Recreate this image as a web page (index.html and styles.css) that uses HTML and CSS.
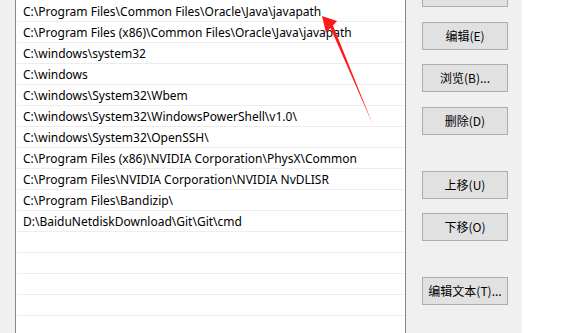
FILE: index.html
```html
<!DOCTYPE html>
<html>
<head>
<meta charset="utf-8">
<link rel="stylesheet" href="styles.css">
</head>
<body>
<div class="dialog">
  <div class="strip"></div>
  <div class="list">
    <div class="row">C:\Program Files\Common Files\Oracle\Java\javapath</div>
    <div class="row">C:\Program Files (x86)\Common Files\Oracle\Java\javapath</div>
    <div class="row">C:\windows\system32</div>
    <div class="row">C:\windows</div>
    <div class="row">C:\windows\System32\Wbem</div>
    <div class="row">C:\windows\System32\WindowsPowerShell\v1.0\</div>
    <div class="row">C:\windows\System32\OpenSSH\</div>
    <div class="row">C:\Program Files (x86)\NVIDIA Corporation\PhysX\Common</div>
    <div class="row">C:\Program Files\NVIDIA Corporation\NVIDIA NvDLISR</div>
    <div class="row">C:\Program Files\Bandizip\</div>
    <div class="row">D:\BaiduNetdiskDownload\Git\Git\cmd</div>
    <div class="row"></div>
    <div class="row"></div>
    <div class="row"></div>
    <div class="row"></div>
    <div class="row"></div>
  </div>
  <div class="buttons">
    <div class="btn first"></div>
    <div class="btn">编辑(E)</div>
    <div class="btn gap14">浏览(B)...</div>
    <div class="btn">删除(D)</div>
    <div class="btn gap36">上移(U)</div>
    <div class="btn gap14">下移(O)</div>
    <div class="btn gap36">编辑文本(T)...</div>
  </div>
</div>
<svg class="arrow" width="571" height="333" viewBox="0 0 571 333">
  <polygon points="322,16 337,21 333,25.5 373,125 330.5,28 326,33" fill="#ff1a1a"/>
</svg>
</body>
</html>
```
FILE: styles.css
```css
html, body {
  margin: 0;
  padding: 0;
  background: #ffffff;
  overflow: hidden;
}
body {
  width: 571px;
  height: 333px;
  position: relative;
  font-family: "Noto Sans", "Noto Sans CJK SC", sans-serif;
  font-size: 12px;
  color: #000;
}
.dialog {
  width: 522px;
  height: 333px;
  background: #f0f0f0;
  display: flex;
  overflow: hidden;
}
.strip {
  width: 15px;
  flex: none;
}
.list {
  width: 389px;
  flex: none;
  background: #fff;
  border-left: 1px solid #828790;
  border-right: 1px solid #828790;
  padding-top: 1px;
}
.row {
  height: 20px;
  line-height: 22px;
  margin: 0 1px;
  padding-left: 6px;
  border-bottom: 1px solid #ededed;
  white-space: nowrap;
  overflow: hidden;
}
.buttons {
  display: flex;
  flex-direction: column;
  padding-left: 16px;
}
.btn {
  width: 84px;
  height: 26px;
  line-height: 25px;
  border: 1px solid #adadad;
  background: #e1e1e1;
  text-align: center;
  margin-top: 15px;
  font-family: "Noto Sans CJK SC", sans-serif;
  flex: none;
}
.btn.first {
  margin-top: -21px;
}
.btn.gap14 {
  margin-top: 14px;
}
.btn.gap36 {
  margin-top: 36px;
}
.arrow {
  position: absolute;
  left: 0;
  top: 0;
  pointer-events: none;
}
```
